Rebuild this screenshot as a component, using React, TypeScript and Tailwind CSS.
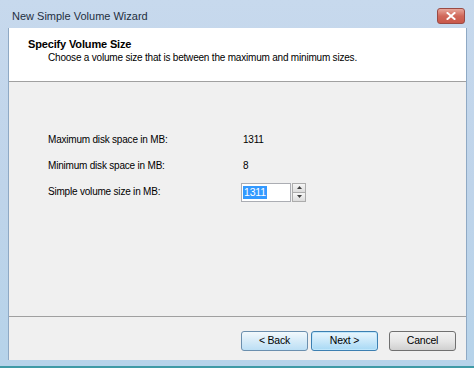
const ui = { fontFamily: '"Liberation Sans", Arial, sans-serif' }

function Row({ label, children }: { label: string; children: React.ReactNode }) {
  return (
    <div className="flex items-center h-[26px] shrink-0">
      <div className="w-[234px] pl-[39px] shrink-0">{label}</div>
      {children}
    </div>
  )
}

function Btn({ label, active }: { label: string; active?: boolean }) {
  return (
    <button
      className={
        'h-[20px] w-[67px] rounded-[3px] border text-[10.5px] tracking-[-0.2px] text-black ' +
        (active
          ? 'border-[#3c7fb1] bg-gradient-to-b from-[#eaf6fd] to-[#a7d9f5] shadow-[inset_0_0_0_1px_#bfe6fb]'
          : 'border-[#6b8fae] bg-gradient-to-b from-[#f2f9fd] via-[#d6ebf8] to-[#bcdff5]')
      }
    >
      {label}
    </button>
  )
}

export default function App() {
  return (
    <div
      className="w-[474px] h-[368px] flex flex-col bg-gradient-to-b from-[#c7d9ed] via-[#bfd4ea] to-[#b6d3ea] text-[#1e1e1e] overflow-hidden"
      style={ui}
    >
      <div className="h-[28px] flex items-center pl-[12px] pr-[9px] pt-[4px] shrink-0">
        <span className="text-[11px] text-[#1f2f3f]">New Simple Volume Wizard</span>
        <div className="ml-auto w-[28px] h-[16px] rounded-[3px] border border-[#9a4a44] bg-gradient-to-b from-[#e7a79c] via-[#d0685a] to-[#c9584a] flex items-center justify-center">
          <svg width="10" height="8" viewBox="0 0 10 8">
            <path d="M1.5 1 L8.5 7 M8.5 1 L1.5 7" stroke="#fff" strokeWidth="2" strokeLinecap="square" />
          </svg>
        </div>
      </div>

      <div className="mx-[8px] mr-[7px] h-[332px] flex flex-col bg-[#f0f0f0] border-l border-r border-[#8fa9c4] shrink-0">
        <div className="h-[54px] bg-white border-b border-[#a0a0a0] pt-[9px] shrink-0">
          <div className="pl-[19px] text-[11px] tracking-[-0.15px] font-bold text-black leading-[14px]">
            Specify Volume Size
          </div>
          <div className="pl-[39px] text-[10px] tracking-[-0.2px] leading-[14px] text-black">
            Choose a volume size that is between the maximum and minimum sizes.
          </div>
        </div>

        <div className="flex-1 flex flex-col pt-[44px] text-[10px] tracking-[-0.2px] text-black">
          <Row label="Maximum disk space in MB:">
            <span>1311</span>
          </Row>
          <Row label="Minimum disk space in MB:">
            <span>8</span>
          </Row>
          <Row label="Simple volume size in MB:">
            <div className="flex -ml-[2px] mt-[3px]">
              <div className="w-[50px] h-[19px] bg-white border border-[#abadb3] flex items-center pl-[1px]">
                <span className="bg-[#3399ff] text-white px-[1px] leading-[13px] text-[10.5px]">1311</span>
              </div>
              <div className="flex flex-col w-[14px] h-[19px] ml-[1px]">
                <div className="h-[9.5px] border border-[#acacac] bg-gradient-to-b from-[#f6f6f6] to-[#dcdcdc] flex items-center justify-center">
                  <svg width="5" height="3" viewBox="0 0 5 3"><path d="M0 3 L2.5 0 L5 3Z" fill="#404040" /></svg>
                </div>
                <div className="h-[9.5px] border border-t-0 border-[#acacac] bg-gradient-to-b from-[#f6f6f6] to-[#dcdcdc] flex items-center justify-center">
                  <svg width="5" height="3" viewBox="0 0 5 3"><path d="M0 0 L2.5 3 L5 0Z" fill="#404040" /></svg>
                </div>
              </div>
            </div>
          </Row>
        </div>

        <div className="h-[44px] border-t border-[#a0a0a0] flex items-start pt-[14px] shrink-0">
          <div className="ml-[232px] flex gap-[3px]">
            <Btn label="< Back" />
            <Btn label="Next >" active />
          </div>
          <div className="ml-[11px] flex">
            <button className="h-[20px] w-[67px] rounded-[3px] border border-[#707070] bg-gradient-to-b from-[#f2f2f2] via-[#e6e6e6] to-[#d0d0d0] text-[10.5px] tracking-[-0.2px] text-black">
              Cancel
            </button>
          </div>
        </div>
      </div>

      <div className="flex-1 flex flex-col justify-end">
        <div className="h-[2px] bg-[#3f9aa6]" />
      </div>
    </div>
  )
}
